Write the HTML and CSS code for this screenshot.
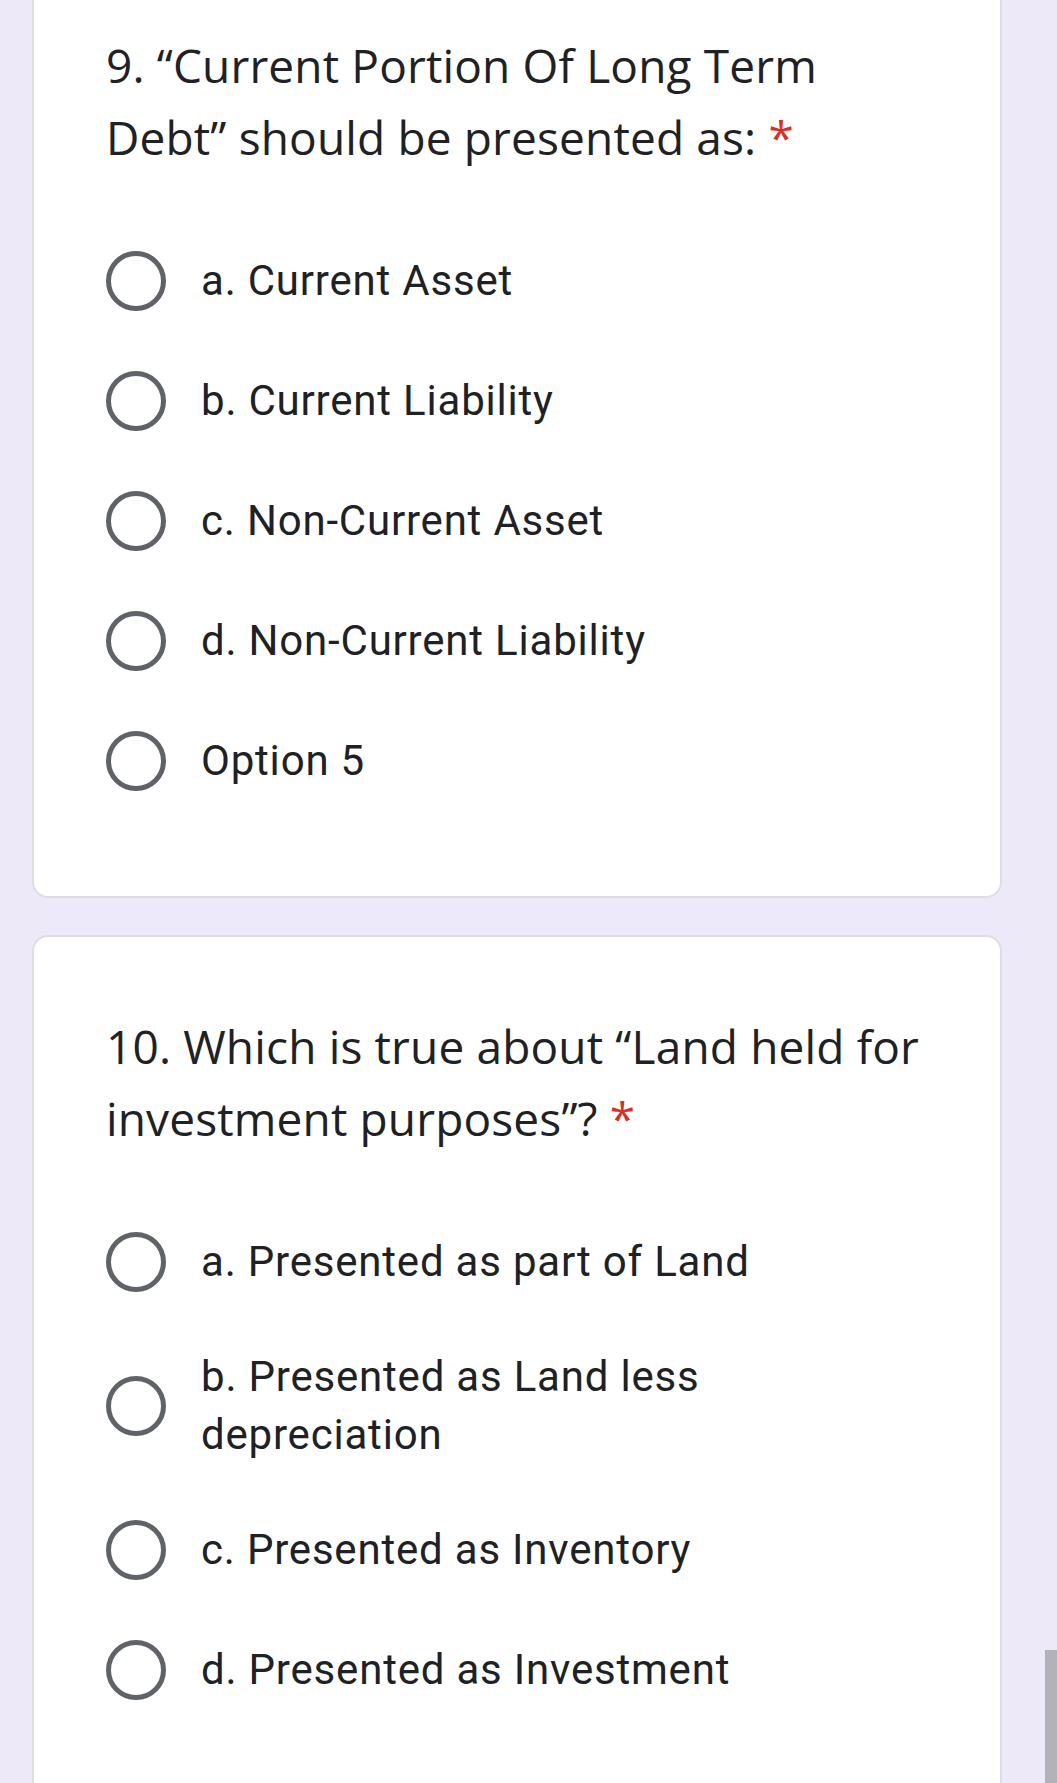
FILE: index.html
```html
<!DOCTYPE html>
<html lang="en">
<head>
    <meta charset="UTF-8">
    <meta name="viewport" content="width=device-width, initial-scale=1.0">
    <title>Quiz</title>
    <link rel="stylesheet" href="styles.css">
</head>
<body>
    <div class="form">
        <div class="card">
            <div class="question">9. “Current Portion Of Long Term Debt” should be presented as: <span class="required">*</span></div>
            <div class="options">
                <label class="option"><span class="radio"></span><span class="option-text">a. Current Asset</span></label>
                <label class="option"><span class="radio"></span><span class="option-text">b. Current Liability</span></label>
                <label class="option"><span class="radio"></span><span class="option-text">c. Non-Current Asset</span></label>
                <label class="option"><span class="radio"></span><span class="option-text">d. Non-Current Liability</span></label>
                <label class="option"><span class="radio"></span><span class="option-text">Option 5</span></label>
            </div>
        </div>
        <div class="card">
            <div class="question">10. Which is true about “Land held for investment purposes”? <span class="required">*</span></div>
            <div class="options">
                <label class="option"><span class="radio"></span><span class="option-text">a. Presented as part of Land</span></label>
                <label class="option"><span class="radio"></span><span class="option-text">b. Presented as Land less depreciation</span></label>
                <label class="option"><span class="radio"></span><span class="option-text">c. Presented as Inventory</span></label>
                <label class="option"><span class="radio"></span><span class="option-text">d. Presented as Investment</span></label>
            </div>
        </div>
    </div>
    <div class="scrollbar"></div>
</body>
</html>
```

FILE: styles.css
```css
html, body {
    overflow: hidden;
}
body {
    margin: 0;
    background-color: #ede9f8;
    color: #202124;
}
.form {
    display: flex;
    flex-direction: column;
    gap: 37px;
    margin-top: -46px;
    margin-left: 32px;
    width: 970px;
}
.card {
    background: white;
    border: 2px solid #dedde3;
    border-radius: 16px;
    padding: 73px 73px 75px 72px;
}
.question {
    font-family: "Open Sans", sans-serif;
    font-size: 46px;
    line-height: 72px;
    letter-spacing: 0.15px;
}
.required {
    color: #d93025;
}
.options {
    margin-top: 48px;
    display: flex;
    flex-direction: column;
}
.option {
    display: flex;
    align-items: center;
    min-height: 68px;
    padding: 26px 0;
    font-family: Roboto, sans-serif;
    font-size: 42px;
    line-height: 58px;
    letter-spacing: 0.8px;
}
.radio {
    flex: none;
    width: 60px;
    height: 60px;
    box-sizing: border-box;
    border: 5.5px solid #5f6368;
    border-radius: 50%;
    margin-right: 35px;
}
.option-text {
    max-width: 700px;
}
.scrollbar {
    position: fixed;
    right: 0;
    top: 1650px;
    width: 12px;
    height: 140px;
    background: #b4b2b9;
}
```
